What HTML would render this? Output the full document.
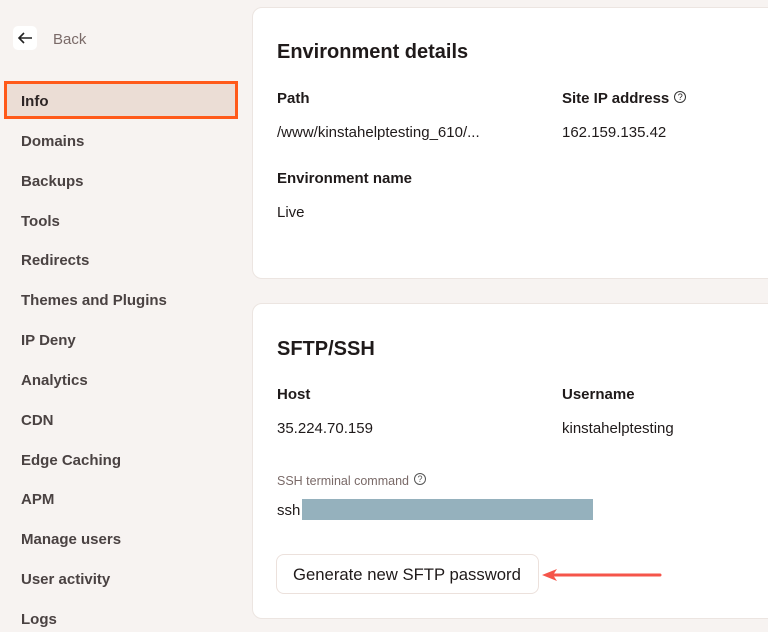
<!DOCTYPE html>
<html><head><style>
*{margin:0;padding:0;box-sizing:border-box}
body{width:768px;height:632px;overflow:hidden;background:#f7f3f1;font-family:"Liberation Sans",Arial,sans-serif;position:relative;color:#1f1a1a}
.a{position:absolute;white-space:nowrap}
.nav{position:absolute;left:21px;font-size:15px;font-weight:bold;color:#4a4242}
.card{position:absolute;left:252px;width:530px;background:#fff;border:1px solid #ece5e1;border-radius:10px}
.h{font-size:20px;font-weight:bold;color:#1f1a1a}
.lb{font-size:15px;font-weight:bold;color:#1f1a1a}
.v{font-size:15px;color:#1f1a1a}
.q{display:inline-block;width:12px;height:12px;border:1px solid #333;border-radius:50%;font-size:9px;line-height:10px;text-align:center;font-weight:normal;vertical-align:3px;margin-left:5px}
</style></head><body>
<div class="a" style="left:13px;top:26px;width:24px;height:24px;background:#fff;border-radius:5px"></div>
<svg class="a" style="left:16px;top:30px" width="18" height="16" viewBox="0 0 18 16"><path d="M16 8H3M8 3L3 8l5 5" fill="none" stroke="#222" stroke-width="1.6"/></svg>
<div class="a" style="left:53px;top:31px;font-size:15px;color:#7a6a68">Back</div>
<div class="a" style="left:4px;top:81px;width:234px;height:38px;background:#ebddd5;border:3px solid #ff5a1a"></div>
<div class="nav" style="top:93px;color:#2d2525">Info</div>
<div class="nav" style="top:133px">Domains</div>
<div class="nav" style="top:173px">Backups</div>
<div class="nav" style="top:213px">Tools</div>
<div class="nav" style="top:252px">Redirects</div>
<div class="nav" style="top:292px">Themes and Plugins</div>
<div class="nav" style="top:332px">IP Deny</div>
<div class="nav" style="top:372px">Analytics</div>
<div class="nav" style="top:412px">CDN</div>
<div class="nav" style="top:452px">Edge Caching</div>
<div class="nav" style="top:491px">APM</div>
<div class="nav" style="top:531px">Manage users</div>
<div class="nav" style="top:571px">User activity</div>
<div class="nav" style="top:611px">Logs</div>

<div class="card" style="top:7px;height:272px"></div>
<div class="a h" style="left:277px;top:41px">Environment details</div>
<div class="a lb" style="left:277px;top:90px">Path</div>
<div class="a lb" style="left:562px;top:90px">Site IP address<span class="q">?</span></div>
<div class="a v" style="left:277px;top:124px">/www/kinstahelptesting_610/...</div>
<div class="a v" style="left:562px;top:124px">162.159.135.42</div>
<div class="a lb" style="left:277px;top:170px">Environment name</div>
<div class="a v" style="left:277px;top:204px">Live</div>

<div class="card" style="top:303px;height:316px"></div>
<div class="a h" style="left:277px;top:338px">SFTP/SSH</div>
<div class="a lb" style="left:277px;top:386px">Host</div>
<div class="a lb" style="left:562px;top:386px">Username</div>
<div class="a v" style="left:277px;top:420px">35.224.70.159</div>
<div class="a v" style="left:562px;top:420px">kinstahelptesting</div>
<div class="a" style="left:277px;top:473px;font-size:12.5px;color:#7a6a68">SSH terminal command<span class="q" style="border-color:#555;color:#555">?</span></div>
<div class="a v" style="left:277px;top:502px">ssh</div>
<div class="a" style="left:302px;top:499px;width:291px;height:21px;background:#95b1bd"></div>
<div class="a" style="left:276px;top:554px;width:263px;height:40px;border:1px solid #ece1dc;border-radius:8px;background:#fff"></div>
<div class="a" style="left:293px;top:565px;font-size:16.7px;color:#1f1a1a">Generate new SFTP password</div>
<svg class="a" style="left:540px;top:566px" width="122" height="18"><path d="M120 9H14" stroke="#f5554a" stroke-width="3" stroke-linecap="round"/><path d="M2 9L17 3L13 9L17 15Z" fill="#f5554a"/></svg>
</body></html>
